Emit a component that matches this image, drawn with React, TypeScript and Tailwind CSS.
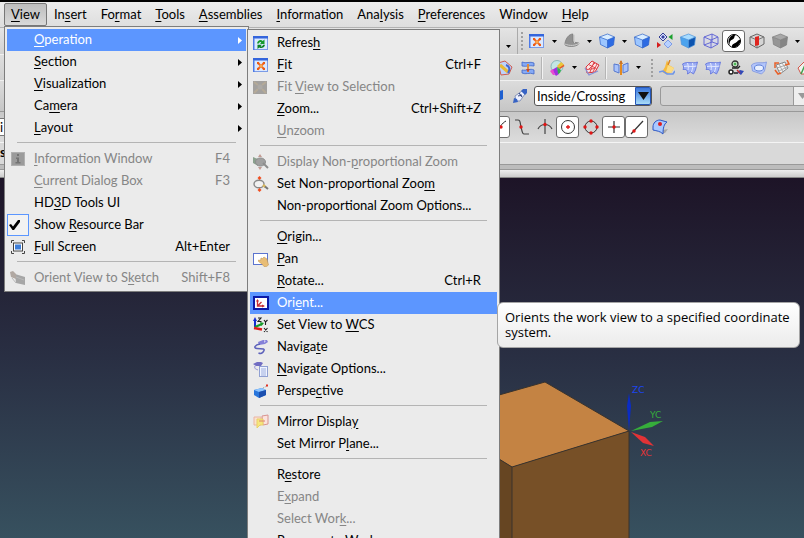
import type { ReactNode } from "react";

/* ---------- icon helpers ---------- */

function Svg({ children }: { children: ReactNode }) {
  return (
    <svg width="16" height="16" viewBox="0 0 16 16" className="shrink-0" aria-hidden="true">
      {children}
    </svg>
  );
}

const Frame = () => (
  <>
    <rect x="0.5" y="1.5" width="14" height="13" fill="#dbe9ff" stroke="#7b9be6" />
    <rect x="0" y="1" width="15" height="2.5" fill="#3465dc" />
    <rect x="0" y="3" width="1.5" height="12" fill="#4d7ae6" />
  </>
);

const RefreshIcon = () => (
  <Svg>
    <Frame />
    <path d="M4 8.5C4.500 5 8 4 9.700 6L11.500 4.500V9H7L8.300 7.600C7.500 6.700 6.500 7 6 8.500Z" fill="#169a2b" />
    <path d="M12 9.800C11.500 13 8 13.800 6.300 12.500L4.500 14V9.800H9L7.600 11C8.500 12 9.500 11.500 10 9.800Z" fill="#0b8021" />
  </Svg>
);

const FitIcon = () => (
  <Svg>
    <Frame />
    <path d="M4.500 5.500L11.500 12.500M11.500 5.500L4.500 12.500" stroke="#ee5a14" strokeWidth="1.800" />
    <path d="M4 5h2.500L4 7.500zM12 5v2.500L9.500 5zM4 13v-2.500L6.500 13zM12 13H9.500L12 10.500z" fill="#ee5a14" />
    <path d="M6.500 7.500h3v3h-3z" fill="#f9a94f" />
  </Svg>
);

const FitSelectionIcon = () => (
  <Svg>
    <rect x="0" y="2" width="14" height="13" fill="#a3a19f" />
    <path d="M1 3l4 3M13 3l-4 3M1 14l4-4M13 14l-4-4" stroke="#b5aa98" strokeWidth="2" />
    <circle cx="7" cy="8" r="2.500" fill="#adaaa6" />
  </Svg>
);

const DisplayZoomIcon = () => (
  <Svg>
    <path d="M0 3l5 2v7l-5-3z" fill="#8aa18e" />
    <ellipse cx="7.500" cy="8" rx="5" ry="4" fill="#a0a0a0" stroke="#8d8d8d" />
    <path d="M10 9l5 5" stroke="#8d8d8d" strokeWidth="2" />
    <path d="M7 0l2 3H5zM7 16l2-3H5z" fill="#c29a92" />
  </Svg>
);

const SetZoomIcon = () => (
  <Svg>
    <ellipse cx="6" cy="8" rx="5" ry="3.800" fill="#f1f1f1" stroke="#888" strokeWidth="1.400" />
    <path d="M10 9l2.500 2" stroke="#d9b85c" strokeWidth="2.400" />
    <path d="M12 10.500l3 2.500" stroke="#777" strokeWidth="2" />
    <path d="M6.500 0l2 2-2 2-2-2zM6.500 12l2 2-2 2-2-2z" fill="#f04d1e" />
  </Svg>
);

const PanIcon = () => (
  <Svg>
    <rect x="0.500" y="2.500" width="14" height="11" fill="#fff" stroke="#5b74cf" />
    <path d="M5.500 9l2 .5L8 7l1.500.5L11 6l1.500 1L14 8l1.500 6-2 1.500H11L9 13l-3.500-2.500z" fill="#e8bd75" stroke="#c59b58" strokeWidth="0.600" />
  </Svg>
);

const OrientIcon = () => (
  <Svg>
    <rect x="1" y="2" width="14" height="12" fill="#fff" stroke="#0b1aa8" strokeWidth="2" />
    <path d="M4.500 5v6h6M4.500 11L8.500 7" stroke="#c72f35" strokeWidth="1.300" fill="none" />
    <path d="M9 9.500l3 1.500-3 1.500zM3 6.500L4.500 4 6 6.500z" fill="#c72f35" />
  </Svg>
);

const WcsIcon = () => (
  <Svg>
    <path d="M2 10V2" stroke="#172ed0" strokeWidth="2" />
    <path d="M0 4l2-4 2 4z" fill="#172ed0" />
    <path d="M2 10l7-3" stroke="#179b2a" strokeWidth="2" />
    <path d="M7 5l4 1-2.500 3z" fill="#179b2a" />
    <path d="M1 11l8 1.500" stroke="#df1c1c" strokeWidth="2.500" />
    <path d="M5 1h3L5 4.500h3.500M11 3l1.500 2L14.500 3M12.500 5v3M11 11l3.500 4M14.500 11L11 15" stroke="#222" strokeWidth="1.100" fill="none" />
  </Svg>
);

const NavigateIcon = () => (
  <Svg>
    <path d="M5 3l5-2h4l1 2-3 2-6 1z" fill="#8480d8" />
    <path d="M7 5C2 6 0 9 4 9.500S12 9 11 11.500 8 15 5.500 14" fill="none" stroke="#5d62bb" strokeWidth="1.500" />
    <path d="M11 1l2 1-2 2z" fill="#cbc9f3" />
  </Svg>
);

const NavigateOptionsIcon = () => (
  <Svg>
    <path d="M0 3l4-2h4l2 1-2 3H3z" fill="#716dc2" />
    <path d="M2 5c-1 3 1 3 3 4" stroke="#8d8bd3" fill="none" />
    <rect x="6.500" y="5.500" width="8" height="10" fill="#f0f4ff" stroke="#90a0d2" />
    <path d="M8 8h5M8 10h5M8 12h5M8 14h5" stroke="#9daede" />
  </Svg>
);

const PerspectiveIcon = () => (
  <Svg>
    <path d="M1 7l8-2 4 2v5l-7 3-5-3z" fill="#2876dc" />
    <path d="M1 7l8-2 4 2-7 2z" fill="#8fc6ff" />
    <path d="M6 9l7-2v5l-7 3z" fill="#1b4faf" />
    <path d="M10 5l4-2" stroke="#999" strokeDasharray="1 1" />
    <rect x="13" y="1.500" width="2" height="2" fill="#e23224" />
  </Svg>
);

const MirrorIcon = () => (
  <Svg>
    <path d="M1 3h7v8H1z" fill="#fae2ce" stroke="#eab4a4" />
    <path d="M9 2l6-1v9l-5 1z" fill="#fbe3dd" stroke="#d99490" />
    <path d="M4 5h6v6H7l-3 3z" fill="#f6e77d" stroke="#e9cf6a" />
    <path d="M6 7h6" stroke="#dd7e72" />
  </Svg>
);

const InfoIcon = () => (
  <Svg>
    <rect x="1" y="1" width="14" height="14" fill="#9b9b9b" />
    <rect x="1.500" y="1.500" width="13" height="13" fill="none" stroke="#b0b0b0" />
    <path d="M7 3h2v2H7zM6 6.500h3V11h1.500v1.500h-5V11H7V8H6z" fill="#747474" />
  </Svg>
);

const FullScreenIcon = () => (
  <Svg>
    <path d="M1.500 4V1.500H4M12 1.500h2.500V4M1.500 12v2.500H4M12 14.500h2.500V12" fill="none" stroke="#444" />
    <rect x="3.500" y="4" width="9" height="8" fill="#fff" stroke="#444" />
    <rect x="5" y="5.500" width="6" height="5" fill="#3f7fd9" />
  </Svg>
);

const SketchIcon = () => (
  <Svg>
    <path d="M5 4l10 3v8l-9-2z" fill="#a6a6a6" />
    <path d="M0 2l3-1 3 3v5L1 7z" fill="#b1a8a2" />
    <path d="M6 7l8 3M2 8l4 5" stroke="#b8b8b8" />
  </Svg>
);

const Cube = ({ top, left, right, line }: { top: string; left: string; right: string; line: string }) => (
  <Svg>
    <path d="M0.500 4l8-3 7 3-7 3z" fill={top} />
    <path d="M0.500 4l8 3v8l-7-3.500z" fill={left} />
    <path d="M8.500 7l7-3-1 8-6 3z" fill={right} />
    <path d="M0.500 4l8-3 7 3-7 3zM0.500 4l1 7.500 7 3.500 6-3 1-8M8.500 7v8" fill="none" stroke={line} strokeWidth="0.700" />
  </Svg>
);

const BlueCube = () => <Cube top="#d9edff" left="#9cc6ff" right="#2d6be3" line="#2b62ca" />;
const SolidCube = () => <Cube top="#a8dcff" left="#4ba3ee" right="#0d54af" line="#4b92da" />;
const GreyCube = () => <Cube top="#a8a8a8" left="#969696" right="#858585" line="#7c7c7c" />;
const WireCube = () => (
  <Svg>
    <path d="M1 4l8-3 6 3-7 3zM1 4v8l7 3 7-4V4M8 7v8M9 1v8l-8 3M9 9l6 2" fill="#cfd5fa" fillOpacity="0.400" stroke="#5a5fd2" strokeWidth="0.900" />
  </Svg>
);
const SectionCube = () => (
  <Svg>
    <path d="M1 4l7-3 7 3v7l-7 4-7-4z" fill="#d5d5d5" stroke="#666" />
    <path d="M1 4l7 3 7-3M8 7v8" stroke="#777" fill="none" />
    <path d="M6 4l4-1v9l-4 1z" fill="#df2620" />
  </Svg>
);
const FanIcon = () => (
  <Svg>
    <path d="M1 10C2 5 5 1 9 1v8l6 1c0 3-9 5-14 2z" fill="#929292" stroke="#757575" strokeWidth="0.700" />
    <path d="M9 1l1.500 1v8M1 11c4 2 11 2 14-1" stroke="#cfcfcf" fill="none" />
  </Svg>
);
const SwapIcon = () => (
  <Svg>
    <path d="M6 0l4 4-4 4-4-4z" fill="#dbe2ff" stroke="#333d93" />
    <path d="M11 7l4 4-4 4-4-4z" fill="#b7d0ff" stroke="#7e9ce6" />
    <path d="M4 4l2-2v4zM6 2l2 2-2 2" fill="#38429e" />
    <path d="M15.500 1v6l-4-3z" fill="#1aa02d" />
    <path d="M0 9v6l4-3z" fill="#d51d1d" />
  </Svg>
);
const EdgeIcon = () => (
  <Svg>
    <circle cx="8" cy="8" r="6.500" fill="#fff" stroke="#000" />
    <path d="M9.500 1.700C8 3 9 5.500 6.500 6.500 4 7.500 3.500 9 3.500 12A7 7 0 0 1 9.500 1.500z" fill="#000" />
    <path d="M14.500 7C12 6.500 12 8 10 9.500S5.500 11 6 14.300A7 7 0 0 0 14.500 7z" fill="#000" />
  </Svg>
);
const PaletteIcon = () => (
  <Svg>
    <circle cx="8" cy="6.500" r="6" fill="#c4e6e4" stroke="#7aa9b0" strokeWidth="0.800" />
    <path d="M3 10L8 7l2 7-3 2z" fill="#a32fe0" />
    <path d="M8 7l6-3 1.500 2L11 9z" fill="#e5552a" />
    <path d="M8 6l4-4 3 2.500L10 8z" fill="#ebc63a" />
    <path d="M8 7l4 3-1 3-2 1z" fill="#30b54a" />
    <path d="M1 11l3-2 2 6H4z" fill="#e74bd0" />
  </Svg>
);
const RedGridIcon = () => (
  <Svg>
    <path d="M2 7l6-6 7 4-4 7-8 1z" fill="#fbe3e3" stroke="#d8323a" />
    <path d="M4.500 4.500l8 4M3 9.500l8-1M10 2L6 12M5 9l6-6M13 4l-4 8" stroke="#e0474c" fill="none" />
    <path d="M1 8l4 7 9-4" stroke="#8792d8" strokeWidth="1.200" fill="none" />
  </Svg>
);
const PlaneIcon = () => (
  <Svg>
    <path d="M1 4l5 1v8l-5-2zM10 5l5-2v8l-5 2z" fill="#a9c3fa" stroke="#5678cf" />
    <path d="M8 1v14" stroke="#e38a1f" strokeWidth="2" />
    <path d="M8 0l2 4H6z" fill="#c9742a" />
  </Svg>
);
const TwistIcon = () => (
  <Svg>
    <path d="M2 2c4 2 8-1 12 1v3C9 5 7 7 2 6zM2 10c5 1 8-2 12 0v4c-5-2-8 1-12-1z" fill="#86aaf5" stroke="#3f66c8" strokeWidth="0.800" />
    <path d="M8 4v8" stroke="#e28c3a" strokeWidth="2" />
    <path d="M6 9h4l-2 3z" fill="#c9452d" />
  </Svg>
);
const PatchIcon = () => (
  <Svg>
    <path d="M1 3l7-2 7 6-3 7-8 1z" fill="#bdd2fb" stroke="#d05b4c" />
    <path d="M3 5l8 7" stroke="#e9ba37" strokeWidth="3" />
    <path d="M9 5c4 1 4 5 2 8" stroke="#3f68cf" strokeWidth="2" fill="none" />
  </Svg>
);
const StarIcon = () => (
  <Svg>
    <path d="M8 0l2 5 5 3-3 5-5 1-4-2 3-5z" fill="#f7bb3c" />
    <path d="M9 5l6 3-3 5-5-1z" fill="#fbdc82" />
    <path d="M0 12l4-1 4 3h6l2-3" stroke="#6f95e6" strokeWidth="1.600" fill="none" />
    <path d="M11 0L9 5" stroke="#d98422" strokeWidth="1.500" />
  </Svg>
);
const SurfaceIcon = () => (
  <Svg>
    <path d="M0.500 4C5 1 11 4 15.500 2l-2 8-2 4-3-2-3 2C6 10 4 9 1 9.500 2 8 1.500 6 0.500 4z" fill="#9fb0f6" stroke="#5c6fdc" strokeWidth="0.800" />
    <path d="M5.500 3c1 3 1 5 .5 7M10.500 3c1 3 0 6-1 9M2 6.500c4-1 8 1 12.500-.5" stroke="#e4eaff" fill="none" />
  </Svg>
);
const RingSurfaceIcon = () => (
  <Svg>
    <path d="M0.500 5C5 1 11 4 15.500 2l-2 9-3 3-9-3z" fill="#b4c6fb" stroke="#7b93e0" strokeWidth="0.800" />
    <ellipse cx="8" cy="8" rx="4.500" ry="3" fill="#e9f0ff" stroke="#5c7fd6" />
  </Svg>
);
const LinkIcon = () => (
  <Svg>
    <circle cx="7" cy="4" r="3" fill="#dff5df" stroke="#333" strokeWidth="1.300" />
    <circle cx="3" cy="12" r="2" fill="#fff" stroke="#222" strokeWidth="1.500" />
    <path d="M4 8h6l2-2M6 13h4" stroke="#222" strokeWidth="1.300" fill="none" />
    <path d="M9 12l3-2 4 1-3 4z" fill="#3048b8" />
    <path d="M9 10l3 3" stroke="#cf2c28" strokeWidth="1.400" />
    <path d="M7 2.500v3M5.500 4h3" stroke="#1c9e2b" />
  </Svg>
);
const OrangeGridIcon = () => (
  <Svg>
    <path d="M2 5l9-3 3 6-8 6z" fill="#f2f2f2" stroke="#888" />
    <path d="M3 8l9-3M5 11l8-4M5 4l4 8M8 3l4 6" stroke="#999" strokeWidth="0.800" />
    <path d="M1 8V3h4M13 0l2 4-4 1M1 10l3 4 3-1" stroke="#e8602a" strokeWidth="1.500" fill="none" />
  </Svg>
);
const HouseIcon = () => (
  <Svg>
    <path d="M1 8l6-6 7 5v7H4z" fill="#eef4ef" stroke="#d45348" />
    <path d="M4 14l4-9" stroke="#3da04e" strokeWidth="1.500" />
  </Svg>
);
const RocketIcon = () => (
  <Svg>
    <path d="M3 8l7-5 3 3-5 7-4 0z" fill="#edf1ff" stroke="#8996b8" />
    <path d="M11 1l4 0v4l-2 2-4-4zM2 10l3 1 1 3-5 1z" fill="#3763c4" />
    <path d="M6 8l4-1M7 5l3 4" stroke="#374a86" strokeWidth="1.200" />
  </Svg>
);
const BlueChipIcon = () => (
  <Svg>
    <path d="M4 5l10-3v9l-8 3z" fill="#1d5fd0" />
  </Svg>
);

const Dot = ({ x, y }: { x: number; y: number }) => <circle cx={x} cy={y} r="1.700" fill="#e01515" />;
const CheckCurveIcon = () => (
  <Svg>
    <path d="M5 14C8 9 11 4 15 2" stroke="#222" fill="none" />
    <Dot x={10} y={8} />
  </Svg>
);
const CurveIcon = () => (
  <Svg>
    <path d="M1 1h3c3 0 2 4 3 7s1 7 3 7h5" stroke="#444" fill="none" strokeWidth="1.200" />
    <Dot x={7} y={8} />
  </Svg>
);
const CrossCurveIcon = () => (
  <Svg>
    <path d="M1 10c3-6 11-6 14 0M8 0v15" stroke="#444" fill="none" strokeWidth="1.200" />
    <Dot x={8} y={5.5} />
  </Svg>
);
const CenterIcon = () => (
  <Svg>
    <circle cx="8" cy="8" r="6.500" stroke="#333" fill="none" />
    <path d="M8 6v4M6 8h4" stroke="#e01515" strokeWidth="1.300" />
  </Svg>
);
const QuadrantIcon = () => (
  <Svg>
    <circle cx="8" cy="8" r="6" stroke="#333" fill="none" />
    <Dot x={8} y={2} />
    <Dot x={8} y={14} />
    <Dot x={2} y={8} />
    <Dot x={14} y={8} />
  </Svg>
);
const PointIcon = () => (
  <Svg>
    <path d="M8 2v12M2 8h12" stroke="#333" strokeWidth="1.200" />
    <Dot x={8} y={8} />
  </Svg>
);
const LinePointIcon = () => (
  <Svg>
    <path d="M2 15L14 2" stroke="#333" strokeWidth="1.200" />
    <Dot x={5} y={12} />
  </Svg>
);
const FaceIcon = () => (
  <Svg>
    <path d="M11 11l5-1-3 4-2 0z" fill="#a8a8a8" />
    <path d="M1 8C1 4 4 1 8 1l7 2c-3 2-4 6-4 12C8 12 5 12 1 11z" fill="#a9c9ff" stroke="#2b55c4" />
    <circle cx="8" cy="5" r="2" fill="#df1d1d" />
  </Svg>
);

/* ---------- toolbar pieces ---------- */

const Tool = ({ label, children, on = false }: { label: string; children: ReactNode; on?: boolean }) => (
  <button
    type="button"
    aria-label={label}
    className={
      on
        ? "flex h-[22px] w-[23px] shrink-0 items-center justify-center rounded-[3px] border border-[#6e6e6e] bg-white"
        : "flex h-[22px] w-[23px] shrink-0 items-center justify-center"
    }
  >
    {children}
  </button>
);

const Drop = ({ label, wide = false }: { label: string; wide?: boolean }) => (
  <button
    type="button"
    aria-label={label}
    className={wide ? "flex h-[22px] w-[18px] shrink-0 items-end justify-center pb-1" : "flex h-[22px] w-3 shrink-0 items-center justify-center"}
  >
    <svg width="5" height="3" viewBox="0 0 5 3" aria-hidden="true">
      <path d="M0 0h5L2.500 3z" fill="#000" />
    </svg>
  </button>
);

const Grip = () => (
  <div className="flex w-[7px] shrink-0 flex-col items-center gap-[2px]">
    {[0, 1, 2, 3, 4].map((n) => (
      <span key={n} className="size-[2px] bg-[#a0a0a0]" />
    ))}
  </div>
);

const Rule = () => (
  <div className="flex w-[6px] shrink-0 justify-center">
    <span className="h-[22px] w-px bg-[#b5b5b5]" />
    <span className="h-[22px] w-px bg-[#f2f2f2]" />
  </div>
);

/* ---------- menus ---------- */

const Mnemonic = ({ text }: { text: string }) => {
  const at = text.indexOf("_");
  if (at < 0) return <>{text}</>;
  return (
    <>
      {text.slice(0, at)}
      <span className="underline underline-offset-2">{text[at + 1]}</span>
      {text.slice(at + 2)}
    </>
  );
};

type Item = {
  text: string;
  keys?: string;
  icon?: ReactNode;
  off?: boolean;
  active?: boolean;
  more?: boolean;
  check?: boolean;
};

const Row = ({ item }: { item: Item }) => {
  if (item.check) {
    return (
      <label className="flex h-[22px] w-full items-center">
        <span className="relative mr-[5px] flex size-[22px] shrink-0">
          <input type="checkbox" defaultChecked className="size-full appearance-none border border-[#5b96ff] bg-[#f2f2f2]" />
          <svg width="12" height="11" viewBox="0 0 12 11" className="pointer-events-none absolute left-[2px] top-[6px]" aria-hidden="true">
            <path d="M0 5l2-1 2 2.500L9 0h2v2L5 10H3.500z" fill="#000" />
          </svg>
        </span>
        <span className="whitespace-nowrap pb-[2px]">
          <Mnemonic text={item.text} />
        </span>
      </label>
    );
  }
  const tone = item.active ? "bg-[#5c96ff] text-white" : item.off ? "text-[#868686]" : "text-black";
  return (
    <button type="button" disabled={item.off} className={`flex h-[22px] w-full items-center ${tone}`}>
      <span className="flex w-[27px] shrink-0 items-center pl-[3px]">{item.icon}</span>
      <span className="flex-1 whitespace-nowrap pb-[2px] text-left">
        <Mnemonic text={item.text} />
      </span>
      {item.keys && <span className="pb-[2px] pr-4">{item.keys}</span>}
      {item.more && (
        <svg width="4" height="7" viewBox="0 0 4 7" className="mr-1" aria-hidden="true">
          <path d="M0 0l4 3.500L0 7z" fill="currentColor" />
        </svg>
      )}
    </button>
  );
};

const Menu = ({ groups }: { groups: Item[][] }) => (
  <>
    {groups.map((group, g) => (
      <div key={g}>
        {g > 0 && <div className="mx-[10px] mb-[5px] mt-[3px] h-px bg-[#b4b4b4]" />}
        {group.map((item) => (
          <Row key={item.text} item={item} />
        ))}
      </div>
    ))}
  </>
);

const viewMenu: Item[][] = [
  [
    { text: "_Operation", more: true, active: true },
    { text: "_Section", more: true },
    { text: "_Visualization", more: true },
    { text: "Ca_mera", more: true },
    { text: "_Layout", more: true },
  ],
  [
    { text: "_Information Window", keys: "F4", icon: <InfoIcon />, off: true },
    { text: "_Current Dialog Box", keys: "F3", off: true },
    { text: "HD_3D Tools UI" },
    { text: "Show _Resource Bar", check: true },
    { text: "_Full Screen", keys: "Alt+Enter", icon: <FullScreenIcon /> },
  ],
  [{ text: "Orient View to S_ketch", keys: "Shift+F8", icon: <SketchIcon />, off: true }],
];

const operationMenu: Item[][] = [
  [
    { text: "Refres_h", icon: <RefreshIcon /> },
    { text: "_Fit", keys: "Ctrl+F", icon: <FitIcon /> },
    { text: "Fit _View to Selection", icon: <FitSelectionIcon />, off: true },
    { text: "_Zoom...", keys: "Ctrl+Shift+Z" },
    { text: "_Unzoom", off: true },
  ],
  [
    { text: "Display Non-_proportional Zoom", icon: <DisplayZoomIcon />, off: true },
    { text: "Set Non-proportional Zoo_m", icon: <SetZoomIcon /> },
    { text: "Non-proport_ional Zoom Options..." },
  ],
  [
    { text: "_Origin..." },
    { text: "_Pan", icon: <PanIcon /> },
    { text: "_Rotate...", keys: "Ctrl+R" },
    { text: "Ori_ent...", icon: <OrientIcon />, active: true },
    { text: "Set View to _WCS", icon: <WcsIcon /> },
    { text: "Naviga_te", icon: <NavigateIcon /> },
    { text: "_Navigate Options...", icon: <NavigateOptionsIcon /> },
    { text: "Perspe_ctive", icon: <PerspectiveIcon /> },
  ],
  [
    { text: "Mirror Displa_y", icon: <MirrorIcon /> },
    { text: "Set Mirror P_lane..." },
  ],
  [
    { text: "R_estore" },
    { text: "E_xpand", off: true },
    { text: "Select Wor_k...", off: true },
    { text: "Re_generate Work" },
  ],
];

const menus = ["In_sert", "Fo_rmat", "_Tools", "_Assemblies", "_Information", "Ana_lysis", "_Preferences", "Wind_ow", "_Help"];

export default function App() {
  return (
    <div className="relative flex h-screen flex-col overflow-hidden bg-[#dcdcdc] font-['Lato',sans-serif] text-[13px] leading-[15px] text-black">
      <nav className="flex h-[27px] shrink-0 items-start border-t-2 border-black bg-gradient-to-b from-[#ececec] to-[#dedede] pl-1 pt-px">
        <button type="button" className="h-[23px] rounded-[2px] border border-[#777] bg-gradient-to-b from-[#bdbdbd] to-[#d9d9d9] px-[6px]">
          <Mnemonic text="_View" />
        </button>
        {menus.map((m) => (
          <button key={m} type="button" className="h-[22px] px-[7px]">
            <Mnemonic text={m} />
          </button>
        ))}
      </nav>

      <div className="flex h-[27px] shrink-0 items-center border-t border-[#b2b2b2] bg-gradient-to-b from-[#e4e4e4] to-[#d2d2d2] pl-[499px]">
        <Drop label="More views" wide />
        <span className="h-full w-px shrink-0 bg-[#aaa]" />
        <Grip />
        <Tool label="Fit"><FitIcon /></Tool>
        <Drop label="Fit options" />
        <Tool label="Section fan"><FanIcon /></Tool>
        <Drop label="Section options" />
        <Tool label="Shaded"><BlueCube /></Tool>
        <Drop label="Shading options" />
        <Tool label="Isometric"><BlueCube /></Tool>
        <Tool label="Swap"><SwapIcon /></Tool>
        <Tool label="Solid"><SolidCube /></Tool>
        <Tool label="Wireframe"><WireCube /></Tool>
        <Tool label="Edges" on><EdgeIcon /></Tool>
        <Tool label="Clip section"><SectionCube /></Tool>
        <Tool label="Edit section"><GreyCube /></Tool>
        <Drop label="More sections" />
      </div>

      <div className="flex h-[26px] shrink-0 items-center border-t border-[#f0f0f0] bg-gradient-to-b from-[#dedede] to-[#d0d0d0] pl-[493px]">
        <Tool label="Patch"><PatchIcon /></Tool>
        <Tool label="Twist"><TwistIcon /></Tool>
        <Rule />
        <Tool label="Palette"><PaletteIcon /></Tool>
        <Drop label="Palette options" />
        <Tool label="Face analysis"><RedGridIcon /></Tool>
        <Rule />
        <Tool label="Datum plane"><PlaneIcon /></Tool>
        <Drop label="Datum options" />
        <div className="flex w-[11px] shrink-0 justify-end"><Grip /></div>
        <Tool label="Studio"><StarIcon /></Tool>
        <Tool label="Through curves"><SurfaceIcon /></Tool>
        <Tool label="Ruled"><SurfaceIcon /></Tool>
        <Tool label="Link"><LinkIcon /></Tool>
        <Tool label="Offset"><RingSurfaceIcon /></Tool>
        <Tool label="Grid deform"><OrangeGridIcon /></Tool>
        <Tool label="Trim"><HouseIcon /></Tool>
      </div>

      <div className="flex h-[31px] shrink-0 items-center border-t border-[#f0f0f0] bg-gradient-to-b from-[#dcdcdc] to-[#c6c6c6] pl-[485px]">
        <Tool label="Chip"><BlueChipIcon /></Tool>
        <Tool label="Select"><RocketIcon /></Tool>
        <div className="relative ml-[3px] h-5 w-[118px] shrink-0">
          <select aria-label="Selection mode" className="h-5 w-full appearance-none rounded-[3px] border border-[#555] bg-white pl-[2px] pr-4 outline-none">
            <option>Inside/Crossing</option>
          </select>
          <span className="pointer-events-none absolute inset-y-px right-px flex w-4 items-center justify-center rounded-r-[2px] border border-[#2456b8] bg-gradient-to-b from-[#3a76dc] to-[#a9dcf8]">
            <svg width="11" height="8" viewBox="0 0 11 8" aria-hidden="true">
              <path d="M0 0h11L5.500 8z" fill="#111" />
            </svg>
          </span>
        </div>
        <div className="relative -mr-2 ml-2 h-5 min-w-0 flex-1">
          <select disabled aria-label="Selection scope" className="h-5 w-full appearance-none rounded-[3px] border border-[#999] bg-[#d2d2d2]" />
          <span className="pointer-events-none absolute inset-y-px right-px flex w-[18px] items-center justify-center border-l border-[#999] bg-[#eee]">
            <svg width="9" height="6" viewBox="0 0 9 6" aria-hidden="true">
              <path d="M0 0h9L4.500 6z" fill="#999" />
            </svg>
          </span>
        </div>
      </div>

      <div className="flex h-[31px] shrink-0 items-center border-t border-[#999] bg-gradient-to-b from-[#c8c8c8] to-[#dcdcdc]">
        <input aria-label="Filter" defaultValue="i" className="h-[18px] w-[487px] shrink-0 border-y border-[#777] bg-white text-black outline-none" />
        <Tool label="Existing point" on><CheckCurveIcon /></Tool>
        <Tool label="Control point"><CurveIcon /></Tool>
        <Tool label="Intersection"><CrossCurveIcon /></Tool>
        <Tool label="Arc center" on><CenterIcon /></Tool>
        <Tool label="Quadrant"><QuadrantIcon /></Tool>
        <Tool label="Point" on><PointIcon /></Tool>
        <Tool label="Point on curve" on><LinePointIcon /></Tool>
        <Tool label="Point on face"><FaceIcon /></Tool>
      </div>

      <div className="h-[22px] shrink-0 border-t border-[#f4f4f4] bg-[#d9d9d9] pt-[2px] font-bold">s</div>
      <div className="h-[6px] shrink-0 border-y border-[#999] bg-[#bcbcbc]" />
      <div className="h-2 shrink-0 border-b border-[#888] bg-gradient-to-b from-[#eee] to-[#ccc]" />

      <main className="relative min-h-0 flex-1 overflow-hidden bg-gradient-to-b from-[#1d1427] via-[#292f43] to-[#37515f]">
        <svg width="804" height="360" viewBox="0 178 804 360" className="absolute left-0 top-0" role="img" aria-label="Model with work coordinate system">
          <path d="M499 395L545 382L629 431L512 467L499 459z" fill="#c48343" />
          <path d="M499 459L512 467V540H499z" fill="#664522" />
          <path d="M512 467L629 431V540H512z" fill="#775027" />
          <path d="M499 395L545 382L629 431L512 467L499 459M512 467V540M629 431V540" fill="none" stroke="#3a332c" />
          <path d="M629 431L627 406L629 393L631 406z" fill="#0b2cc4" />
          <path d="M631 431L650 422L663 421L652 427z" fill="#36ad3b" />
          <path d="M631 432L645 437L654 446L643 443z" fill="#e23336" />
          <g fontFamily="DejaVu Sans, sans-serif" fontSize="9">
            <text x="632" y="393" fill="#1c45f0">ZC</text>
            <text x="650" y="418" fill="#36ad3b">YC</text>
            <text x="640" y="456" fill="#e23336">XC</text>
          </g>
        </svg>
      </main>

      <div className="absolute left-1 top-[26px] w-[245px] border border-[#7d7d7d] bg-[#ebebeb] px-[2px] py-[2px]">
        <Menu groups={viewMenu} />
      </div>
      <div className="absolute left-[247px] top-[29px] w-[253px] border border-[#7d7d7d] bg-[#ebebeb] px-[2px] py-[2px]">
        <Menu groups={operationMenu} />
      </div>
      <div role="tooltip" className="absolute left-[497px] top-[302px] w-[303px] rounded-[6px] border border-[#a5a5a5] bg-gradient-to-b from-white to-[#ebebeb] px-[7px] py-[7px] font-['Open_Sans',sans-serif]">
        Orients the work view to a specified coordinate system.
      </div>
    </div>
  );
}
